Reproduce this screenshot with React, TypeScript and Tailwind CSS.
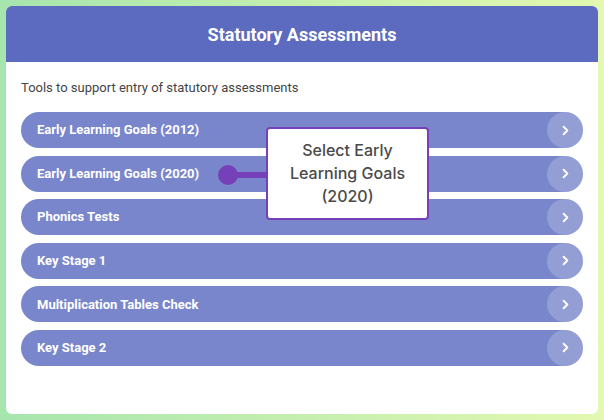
import { ChevronRight } from "lucide-react";

const items = [
  "Early Learning Goals (2012)",
  "Early Learning Goals (2020)",
  "Phonics Tests",
  "Key Stage 1",
  "Multiplication Tables Check",
  "Key Stage 2",
];

export default function App() {
  return (
    <div className="w-[604px] h-[420px] p-[6px] bg-gradient-to-r from-[#a6e5ae] to-[#e3f8b0] font-['Roboto',sans-serif]">
      <div className="relative h-full overflow-hidden rounded-md bg-white">
        <div className="flex h-[56px] items-center justify-center bg-[#5c6bc0] text-[18px] font-bold text-white">
          Statutory Assessments
        </div>

        <div className="px-[15px]">
          <p className="pt-[17px] text-[13px] leading-[18px] text-[#444]">
            Tools to support entry of statutory assessments
          </p>

          <div className="mt-[15px] flex flex-col gap-[7.6px]">
            {items.map((label) => (
              <div
                key={label}
                className="flex h-[36px] items-center justify-between rounded-full bg-[#7986cb] pl-[16px] text-[13px] font-bold text-white"
              >
                <span>{label}</span>
                <span className="flex h-[36px] w-[36px] items-center justify-center rounded-full bg-white/20">
                  <ChevronRight size={15} strokeWidth={3} />
                </span>
              </div>
            ))}
          </div>
        </div>

        {/* callout */}
        <div className="absolute left-[212px] top-[159px] h-[20px] w-[20px] rounded-full bg-[#7540b8]" />
        <div className="absolute left-[222px] top-[166px] h-[6px] w-[40px] bg-[#7540b8]" />
        <div className="absolute left-[260px] top-[121px] flex h-[93px] w-[163px] items-center justify-center rounded-[4px] border-2 border-[#7540b8] bg-white text-center font-['Inter',sans-serif] text-[16px] font-medium leading-[23px] text-[#4a4a4a]">
          Select Early
          <br />
          Learning Goals
          <br />
          (2020)
        </div>
      </div>
    </div>
  );
}
